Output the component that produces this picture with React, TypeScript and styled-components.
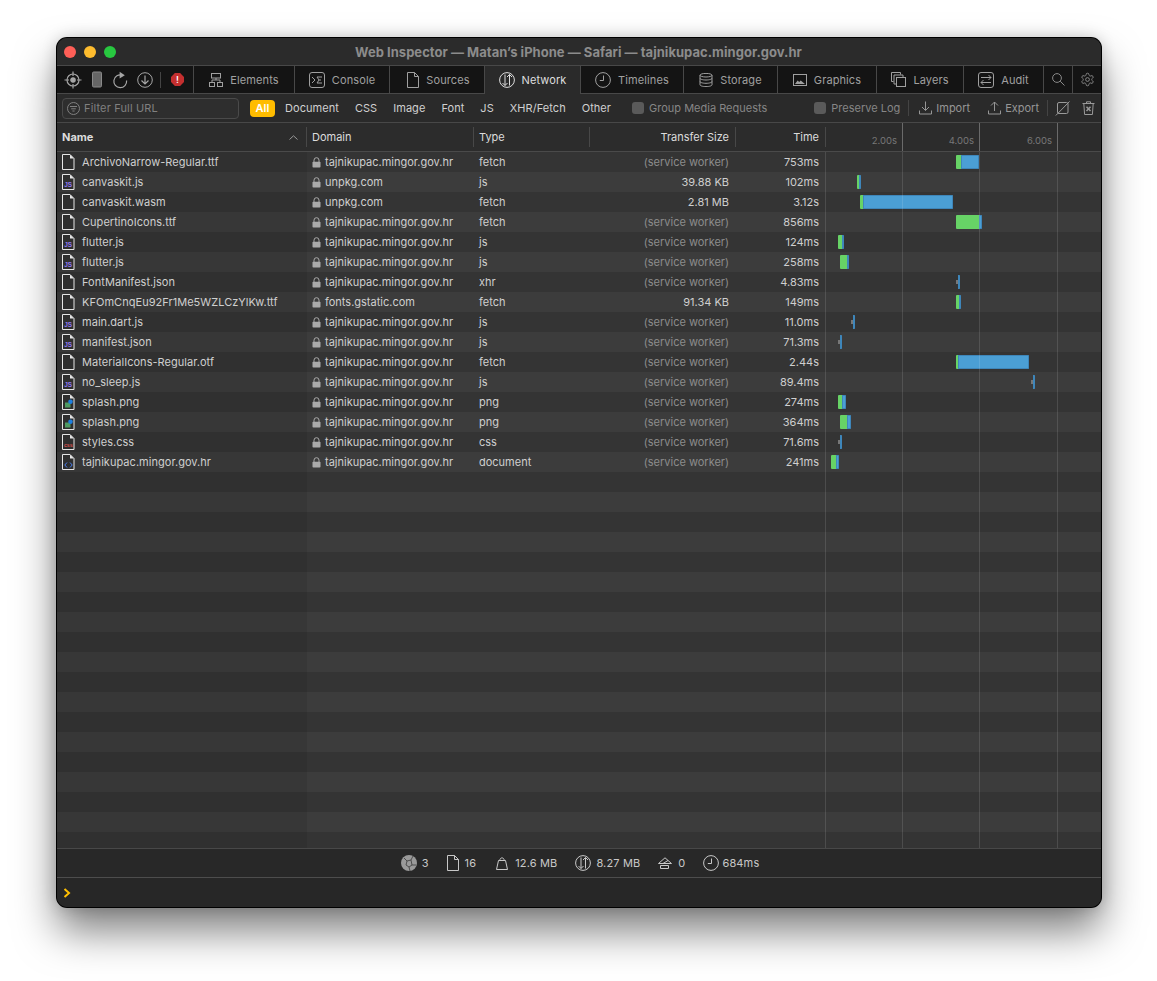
import React from 'react'
import styled, { createGlobalStyle } from 'styled-components'

const GlobalStyle = createGlobalStyle`
  html, body {
    margin: 0;
    padding: 0;
    background: #fff;
    font-family: Inter, "Liberation Sans", sans-serif;
  }
`

const stroke = { fill: 'none', stroke: 'currentColor', strokeWidth: 1 }

const Crosshair = () => (
  <svg width="18" height="18" viewBox="0 0 18 18" {...stroke} strokeWidth={1.2}>
    <circle cx="9" cy="9" r="6" />
    <circle cx="9" cy="9" r="2.2" fill="currentColor" />
    <path d="M9 0.5V5M9 13v4.5M0.5 9H5M13 9h4.5" />
  </svg>
)
const Device = () => (
  <svg width="12" height="17" viewBox="0 0 12 17">
    <rect x="1.5" y="1" width="9" height="15" rx="1.2" fill="#666" stroke="#8a8a8a" />
  </svg>
)
const Reload = () => (
  <svg width="16" height="18" viewBox="0 0 16 18" {...stroke} strokeWidth={1.2}>
    <path d="M10.2 4.2A6.4 6.4 0 1 0 14.6 9.5" />
    <path d="M7.6 0.8l5.2 3.4-5.2 3.2z" fill="currentColor" stroke="none" />
  </svg>
)
const Download = () => (
  <svg width="16" height="16" viewBox="0 0 16 16" {...stroke}>
    <circle cx="8" cy="8" r="7.3" />
    <path d="M8 3.5v8.5M4.5 8.5L8 12l3.5-3.5" strokeWidth={1.2} />
  </svg>
)
const Elements = () => (
  <svg width="14" height="14" viewBox="0 0 14 14" {...stroke}>
    <rect x="2.5" y="0.5" width="9" height="4.500" />
    <rect x="0.5" y="9.500" width="5" height="4" />
    <rect x="8.500" y="9.500" width="5" height="4" />
    <path d="M7 5v2M3 9.500V7h8v2.500" />
  </svg>
)
const ConsoleIcon = () => (
  <svg width="16" height="16" viewBox="0 0 16 16" {...stroke}>
    <rect x="0.5" y="0.5" width="15" height="15" rx="2.5" />
    <path d="M3 5L6 8 3 11M8 5h5M10 8h2M8 11h5M8 5l2 3-2 3" />
  </svg>
)
const Doc = ({ size = 16 }: { size?: number }) => (
  <svg width={Math.round(size * 0.75)} height={size} viewBox="0 0 12 16" {...stroke}>
    <path d="M0.5 0.5h7l4 4v11h-11zM7.5 0.5v4h4" />
  </svg>
)
const NetworkIcon = () => (
  <svg width="16" height="16" viewBox="0 0 16 16" {...stroke}>
    <circle cx="8" cy="8" r="7.4" />
    <path d="M6 2.5v11M3.5 11L6 13.5 8.5 11M10.5 13.5v-11M8 5l2.5-2.5L13 5" />
  </svg>
)
const Clock = () => (
  <svg width="16" height="16" viewBox="0 0 16 16" {...stroke}>
    <circle cx="8" cy="8" r="7.4" />
    <path d="M8.5 3.5v5H4.8" />
  </svg>
)
const StorageIcon = () => (
  <svg width="14" height="14" viewBox="0 0 14 14" {...stroke}>
    <ellipse cx="7" cy="2.2" rx="6" ry="1.8" />
    <path d="M1 2.2v9.6C1 12.8 3.7 13.6 7 13.6s6-.8 6-1.8V2.2M1 5.2C1 6.2 3.7 7 7 7s6-.8 6-1.8M1 8.5c0 1 2.7 1.8 6 1.8s6-.8 6-1.8" />
  </svg>
)
const GraphicsIcon = () => (
  <svg width="14" height="12" viewBox="0 0 14 12">
    <rect x="0.5" y="0.5" width="13" height="11" fill="none" stroke="currentColor" />
    <path d="M2 10l2.6-3.5 1.6 1.6 1.5-1.7L12 10z" fill="currentColor" />
  </svg>
)
const LayersIcon = () => (
  <svg width="15" height="15" viewBox="0 0 15 15" {...stroke}>
    <path d="M9.5 2.5v-2h-9v9h2M12 5V3H3v9h2" />
    <rect x="5.5" y="5.5" width="9" height="9" />
  </svg>
)
const AuditIcon = () => (
  <svg width="16" height="16" viewBox="0 0 16 16" {...stroke}>
    <rect x="0.5" y="0.5" width="15" height="15" rx="2.5" />
    <path d="M3 5.5h10M10.5 3L13 5.5 10.5 8M13 10.5H3M5.5 8L3 10.5 5.5 13" />
  </svg>
)
const SearchIcon = () => (
  <svg width="13" height="13" viewBox="0 0 13 13" {...stroke}>
    <circle cx="5" cy="5" r="4.4" />
    <path d="M8.2 8.2l4.3 4.3" />
  </svg>
)
const GearIcon = () => (
  <svg width="15" height="15" viewBox="0 0 24 24" fill="none" stroke="currentColor" strokeWidth={1.6}>
    <path d="M12.2 2h-.4a2 2 0 0 0-2 2v.2a2 2 0 0 1-1 1.7l-.4.3a2 2 0 0 1-2 0l-.2-.1a2 2 0 0 0-2.7.7l-.2.4a2 2 0 0 0 .7 2.7l.2.1a2 2 0 0 1 1 1.7v.5a2 2 0 0 1-1 1.8l-.2.1a2 2 0 0 0-.7 2.7l.2.4a2 2 0 0 0 2.7.7l.2-.1a2 2 0 0 1 2 0l.4.3a2 2 0 0 1 1 1.7v.2a2 2 0 0 0 2 2h.4a2 2 0 0 0 2-2v-.2a2 2 0 0 1 1-1.7l.4-.3a2 2 0 0 1 2 0l.2.1a2 2 0 0 0 2.7-.7l.2-.4a2 2 0 0 0-.7-2.7l-.2-.1a2 2 0 0 1-1-1.8v-.5a2 2 0 0 1 1-1.7l.2-.1a2 2 0 0 0 .7-2.7l-.2-.4a2 2 0 0 0-2.7-.7l-.2.1a2 2 0 0 1-2 0l-.4-.3a2 2 0 0 1-1-1.7V4a2 2 0 0 0-2-2z" />
    <circle cx="12" cy="12" r="3" />
  </svg>
)
const FilterIcon = () => (
  <svg width="13" height="13" viewBox="0 0 13 13" {...stroke}>
    <circle cx="6.5" cy="6.5" r="6" />
    <path d="M3 4.5h7M4.2 6.8h4.6M5.4 9h2.2" />
  </svg>
)
const ImportIcon = () => (
  <svg width="13" height="14" viewBox="0 0 13 14" {...stroke}>
    <path d="M6.5 0.5v9M3 6l3.5 3.5L10 6M0.5 9.5v3.5h12V9.5" />
  </svg>
)
const ExportIcon = () => (
  <svg width="13" height="14" viewBox="0 0 13 14" {...stroke}>
    <path d="M6.5 10V1M3 4.5L6.500 1 10 4.500M0.5 9.500v3.500h12V9.500" />
  </svg>
)
const NoOverlay = () => (
  <svg width="15" height="15" viewBox="0 0 15 15" {...stroke}>
    <rect x="2.500" y="1.500" width="10.500" height="11" rx="1.500" />
    <path d="M0.800 14.500L14.500 0.500" />
  </svg>
)
const TrashIcon = () => (
  <svg width="13" height="14" viewBox="0 0 13 14">
    <path d="M0.500 2.500h12M4.500 2.500V0.800h4v1.700M1.800 2.500l.8 11h7.800l.8-11" fill="none" stroke="currentColor" />
    <path d="M4.500 5.800l4 4.200M8.500 5.800l-4 4.200" fill="none" stroke="currentColor" strokeWidth="1.500" />
  </svg>
)
const GlobeIcon = () => (
  <svg width="16" height="16" viewBox="0 0 16 16">
    <circle cx="8" cy="8" r="8" fill="#9a9a9a" />
    <path d="M3 3l3 3-1 4 3 2 1 4M6 6l4-1 2-4M10 5l1 5-3 2M11 10l4 0" fill="none" stroke="#3a3a3a" strokeWidth="0.8" />
  </svg>
)
const WeightIcon = () => (
  <svg width="12" height="13" viewBox="0 0 12 13" {...stroke}>
    <path d="M2.500 3.500h7l2 9H0.500zM3.800 3.500C3.800 0 8.200 0 8.200 3.500" />
  </svg>
)
const CacheIcon = () => (
  <svg width="14" height="12" viewBox="0 0 14 12" {...stroke}>
    <path d="M0.500 6.500L7 0.800 13.500 6.500zM2.500 8.500h8v3h-8z" />
    <path d="M5 6.500l5-3" />
  </svg>
)
const LockIcon = () => (
  <svg width="9" height="11" viewBox="0 0 9 11">
    <path d="M2 5V3.200a2.500 2.500 0 0 1 5 0V5" fill="none" stroke="#aaa" />
    <rect x="0.500" y="4.800" width="8" height="5.700" rx="0.800" fill="#aaa" />
  </svg>
)

type FileKind = 'file' | 'js' | 'png' | 'css' | 'doc'

const FileIcon = ({ kind }: { kind: FileKind }) => (
  <svg width="13" height="16" viewBox="0 0 13 16">
    <path d="M0.500 0.500h7.500l4 4v11h-11.500z" fill="#2e2e2e" stroke="#e6e6e6" />
    <path d="M8 0.500l4 4h-4z" fill="#e6e6e6" />
    {kind === 'js' && (
      <text x="6.200" y="13" textAnchor="middle" fontSize="6.500" fontWeight="700" fontFamily="Liberation Sans" fill="#8f78ee">JS</text>
    )}
    {kind === 'css' && (
      <text x="6.300" y="13" textAnchor="middle" fontSize="5.200" fontWeight="700" fontFamily="Liberation Sans" fill="#d9534f">css</text>
    )}
    {kind === 'png' && (
      <>
        <rect x="3" y="8.500" width="5.500" height="5" fill="#4f9a63" />
        <circle cx="8.500" cy="7.800" r="2.300" fill="#1e7fe0" />
      </>
    )}
    {kind === 'doc' && (
      <path d="M5 8.500L2.800 11 5 13.500M8 8.500L10.200 11 8 13.500" fill="none" stroke="#4a80f0" strokeWidth="1" />
    )}
  </svg>
)

const tabs = [
  { label: 'Elements', icon: <Elements />, width: 101 },
  { label: 'Console', icon: <ConsoleIcon />, width: 95 },
  { label: 'Sources', icon: <Doc />, width: 95, nudge: 3 },
  { label: 'Network', icon: <NetworkIcon />, width: 96, active: true },
  { label: 'Timelines', icon: <Clock />, width: 103 },
  { label: 'Storage', icon: <StorageIcon />, width: 94 },
  { label: 'Graphics', icon: <GraphicsIcon />, width: 99 },
  { label: 'Layers', icon: <LayersIcon />, width: 87 },
  { label: 'Audit', icon: <AuditIcon />, width: 80 },
]

const filters = ['Document', 'CSS', 'Image', 'Font', 'JS', 'XHR/Fetch', 'Other']

const gs = 'tajnikupac.mingor.gov.hr'
const sw = '(service worker)'

// left is px from the start of the timeline column, bars are [green, blue] widths
const requests: {
  name: string; kind: FileKind; domain: string; type: string; size: string; time: string
  left: number; green: number; blue: number; stub?: boolean
}[] = [
  { name: 'ArchivoNarrow-Regular.ttf', kind: 'file', domain: gs, type: 'fetch', size: sw, time: '753ms', left: 130, green: 5, blue: 18 },
  { name: 'canvaskit.js', kind: 'js', domain: 'unpkg.com', type: 'js', size: '39.88 KB', time: '102ms', left: 31, green: 2, blue: 2 },
  { name: 'canvaskit.wasm', kind: 'file', domain: 'unpkg.com', type: 'fetch', size: '2.81 MB', time: '3.12s', left: 34, green: 3, blue: 90 },
  { name: 'CupertinoIcons.ttf', kind: 'file', domain: gs, type: 'fetch', size: sw, time: '856ms', left: 130, green: 23, blue: 3 },
  { name: 'flutter.js', kind: 'js', domain: gs, type: 'js', size: sw, time: '124ms', left: 12, green: 4, blue: 2 },
  { name: 'flutter.js', kind: 'js', domain: gs, type: 'js', size: sw, time: '258ms', left: 14, green: 7, blue: 2 },
  { name: 'FontManifest.json', kind: 'file', domain: gs, type: 'xhr', size: sw, time: '4.83ms', left: 130, green: 2, blue: 2, stub: true },
  { name: 'KFOmCnqEu92Fr1Me5WZLCzYlKw.ttf', kind: 'file', domain: 'fonts.gstatic.com', type: 'fetch', size: '91.34 KB', time: '149ms', left: 130, green: 3, blue: 2 },
  { name: 'main.dart.js', kind: 'js', domain: gs, type: 'js', size: sw, time: '11.0ms', left: 25, green: 2, blue: 2, stub: true },
  { name: 'manifest.json', kind: 'js', domain: gs, type: 'js', size: sw, time: '71.3ms', left: 12, green: 2, blue: 2, stub: true },
  { name: 'MaterialIcons-Regular.otf', kind: 'file', domain: gs, type: 'fetch', size: sw, time: '2.44s', left: 130, green: 2, blue: 71 },
  { name: 'no_sleep.js', kind: 'js', domain: gs, type: 'js', size: sw, time: '89.4ms', left: 205, green: 2, blue: 2, stub: true },
  { name: 'splash.png', kind: 'png', domain: gs, type: 'png', size: sw, time: '274ms', left: 12, green: 4, blue: 4 },
  { name: 'splash.png', kind: 'png', domain: gs, type: 'png', size: sw, time: '364ms', left: 14, green: 7, blue: 4 },
  { name: 'styles.css', kind: 'css', domain: gs, type: 'css', size: sw, time: '71.6ms', left: 12, green: 2, blue: 2, stub: true },
  { name: gs, kind: 'doc', domain: gs, type: 'document', size: sw, time: '241ms', left: 5, green: 5, blue: 3 },
]

const TOTAL_ROWS = 35
const COLUMNS = '250px 167px 116px 146px 90px 1fr'

const App: React.FC = () => {
  return (
    <Page>
      <GlobalStyle />
      <Window>
        <TitleBar>
          <Lights>
            <Light $color="#ff5f57" />
            <Light $color="#febc2e" />
            <Light $color="#28c840" />
          </Lights>
          <Title>Web Inspector — Matan’s iPhone — Safari — tajnikupac.mingor.gov.hr</Title>
        </TitleBar>

        <TabBar>
          <ToolGroup>
            <Crosshair />
            <Device />
            <Reload />
            <Download />
            <ToolDivider />
            <ErrorBadge>!</ErrorBadge>
          </ToolGroup>
          {tabs.map(tab => (
            <Tab key={tab.label} $active={tab.active} $width={tab.width} $nudge={tab.nudge}>
              {tab.icon}
              <span>{tab.label}</span>
            </Tab>
          ))}
          <IconTab $width={29}><SearchIcon /></IconTab>
          <IconTab $width={29}><GearIcon /></IconTab>
        </TabBar>

        <FilterBar>
          <FilterInput>
            <FilterIcon />
            <span>Filter Full URL</span>
          </FilterInput>
          <Pill>All</Pill>
          {filters.map(f => <FilterLink key={f}>{f}</FilterLink>)}
          <CheckLabel $left={5}><Checkbox />Group Media Requests</CheckLabel>
          <Spacer />
          <CheckLabel><Checkbox />Preserve Log</CheckLabel>
          <BarDivider />
          <BarAction $gap={15}><ImportIcon />Import</BarAction>
          <BarAction><ExportIcon />Export</BarAction>
          <BarDivider />
          <BarIcon><NoOverlay /></BarIcon>
          <BarIcon><TrashIcon /></BarIcon>
        </FilterBar>

        <Grid>
          <HeaderRow>
            <HeadCell $bold>
              Name
              <SortCaret viewBox="0 0 9 5" width="9" height="5"><path d="M0.500 4.500L4.500 0.800 8.500 4.500" fill="none" stroke="#999" /></SortCaret>
            </HeadCell>
            <HeadCell>Domain</HeadCell>
            <HeadCell>Type</HeadCell>
            <HeadCell $right>Transfer Size</HeadCell>
            <HeadCell $right>Time</HeadCell>
            <Scale>
              <ScaleMark>2.00s</ScaleMark>
              <ScaleMark>4.00s</ScaleMark>
              <ScaleMark>6.00s</ScaleMark>
            </Scale>
          </HeaderRow>

          <Body>
            {Array.from({ length: TOTAL_ROWS }).map((_, i) => {
              const r = requests[i]
              return (
                <Row key={i} $odd={i % 2 === 1}>
                  <NameCell $odd={i % 2 === 1}>
                    {r && <FileIcon kind={r.kind} />}
                    {r && <span>{r.name}</span>}
                  </NameCell>
                  <Cell>
                    {r && <LockIcon />}
                    {r && <span>{r.domain}</span>}
                  </Cell>
                  <Cell>{r?.type}</Cell>
                  <Cell $right $dim={r?.size === sw}>{r?.size}</Cell>
                  <Cell $right>{r?.time}</Cell>
                  <Waterfall>
                    {r && (
                      <>
                        <span style={{ width: r.left }} />
                        {r.stub ? <Stub /> : <GreenBar style={{ width: r.green }} />}
                        <BlueBar style={{ width: r.blue }} />
                      </>
                    )}
                  </Waterfall>
                </Row>
              )
            })}
            <GridLine $at={-1} />
            <GridLine $at={76} />
            <GridLine $at={153} />
            <GridLine $at={231} />
          </Body>
        </Grid>

        <StatusBar>
          <Stat><GlobeIcon />3</Stat>
          <Stat $gap={6}><Doc size={16} />16</Stat>
          <Stat $gap={7} $left={2}><WeightIcon />12.6 MB</Stat>
          <Stat><NetworkIcon />8.27 MB</Stat>
          <Stat $gap={6}><CacheIcon />0</Stat>
          <Stat $gap={3}><Clock />684ms</Stat>
        </StatusBar>

        <Prompt>
          <svg width="8" height="10" viewBox="0 0 8 10">
            <path d="M1.500 1L6 5 1.500 9" fill="none" stroke="#ffbf00" strokeWidth="2" />
          </svg>
        </Prompt>
      </Window>
    </Page>
  )
}

const Page = styled.div`
  width: 1157px;
  height: 981px;
  padding: 38px 0 0 57px;
  box-sizing: border-box;
  overflow: hidden;
  background: #fff;
`

const Window = styled.div`
  width: 1044px;
  height: 869px;
  box-sizing: border-box;
  display: flex;
  flex-direction: column;
  background: #282828;
  border-radius: 10px;
  overflow: hidden;
  box-shadow: 0 0 0 1px #000, 0 24px 42px rgba(0, 0, 0, 0.5), 0 0 16px rgba(0, 0, 0, 0.2);
  color: #d8d8d8;
  font-size: 11px;
`

const TitleBar = styled.div`
  height: 28px;
  flex: none;
  box-sizing: border-box;
  display: flex;
  align-items: center;
  justify-content: center;
  position: relative;
  background: #2b2b2b;
  border-bottom: 1px solid #484848;
`

const Lights = styled.div`
  position: absolute;
  left: 7px;
  top: 8px;
  display: flex;
  gap: 8px;
`

const Light = styled.i<{ $color: string }>`
  width: 12px;
  height: 12px;
  border-radius: 50%;
  background: ${p => p.$color};
`

const Title = styled.div`
  font-size: 13px;
  font-weight: 700;
  color: #8c8c8c;
  letter-spacing: 0.03px;
  margin-right: 1px;
`

const TabBar = styled.div`
  height: 28px;
  flex: none;
  display: flex;
  background: #141414;
  border-bottom: 1px solid #484848;
  box-sizing: border-box;
`

const ToolGroup = styled.div`
  width: 136px;
  box-sizing: border-box;
  display: flex;
  align-items: center;
  gap: 9px;
  padding-left: 7px;
  color: #a6a6a6;
  flex: none;
`

const ToolDivider = styled.div`
  width: 1px;
  height: 16px;
  margin: 0 1px 0 -2px;
  background: #444;
`

const ErrorBadge = styled.div`
  width: 13px;
  height: 13px;
  background: #c42f2f;
  clip-path: polygon(30% 0, 70% 0, 100% 30%, 100% 70%, 70% 100%, 30% 100%, 0 70%, 0 30%);
  color: #fff;
  font-size: 9px;
  font-weight: 600;
  line-height: 13px;
  text-align: center;
`

const Tab = styled.div<{ $active?: boolean; $width: number; $nudge?: number }>`
  width: ${p => p.$width}px;
  flex: none;
  box-sizing: border-box;
  display: flex;
  align-items: center;
  justify-content: center;
  gap: 7px;
  padding-left: ${p => p.$nudge ?? 0}px;
  font-size: 11px;
  letter-spacing: 0.1px;
  border-left: 1px solid #484848;
  color: ${p => (p.$active ? '#dedede' : '#a0a0a0')};
  background: ${p => (p.$active ? '#2a2a2a' : 'transparent')};
  height: ${p => (p.$active ? '28px' : 'auto')};
`

const IconTab = styled.div<{ $width: number }>`
  width: ${p => p.$width}px;
  flex: none;
  box-sizing: border-box;
  display: flex;
  align-items: center;
  justify-content: center;
  border-left: 1px solid #484848;
  color: #8a8a8a;
`

const FilterBar = styled.div`
  height: 29px;
  flex: none;
  display: flex;
  align-items: center;
  box-sizing: border-box;
  padding: 0 6px 0 5px;
  background: #2a2a2a;
  border-bottom: 1px solid #484848;
`

const FilterInput = styled.div`
  width: 177px;
  height: 21px;
  box-sizing: border-box;
  margin-right: 11px;
  display: flex;
  align-items: center;
  gap: 4px;
  padding-left: 4px;
  border: 1px solid #4a4a4a;
  border-radius: 4px;
  background: #2e2e2e;
  color: #808080;
  font-size: 11px;
  letter-spacing: 0.15px;
`

const Pill = styled.div`
  width: 25px;
  height: 17px;
  line-height: 17px;
  text-align: center;
  border-radius: 4px;
  background: #ffbc00;
  color: #fff;
  font-weight: 600;
  margin-right: 10px;
`

const FilterLink = styled.div`
  color: #d0d0d0;
  margin-right: 16px;
  letter-spacing: 0.05px;
`

const Spacer = styled.div`
  flex: 1;
`

const CheckLabel = styled.div<{ $left?: number }>`
  display: flex;
  align-items: center;
  gap: 5px;
  color: #868686;
  margin-left: ${p => p.$left ?? 0}px;
`

const Checkbox = styled.i`
  width: 12px;
  height: 12px;
  border-radius: 3px;
  background: #5a5a5a;
`

const BarDivider = styled.div`
  width: 1px;
  height: 16px;
  margin: 0 7px 0 8px;
  background: #444;
`

const BarAction = styled.div<{ $gap?: number }>`
  display: flex;
  align-items: center;
  gap: 4px;
  color: #969696;
  margin: 0 ${p => p.$gap ?? 0}px 0 3px;
`

const BarIcon = styled.div`
  display: flex;
  color: #9a9a9a;
  margin-right: 12px;
  &:last-child {
    margin-right: 0;
  }
`

const Grid = styled.div`
  flex: none;
  display: flex;
  flex-direction: column;
`

const HeaderRow = styled.div`
  height: 29px;
  flex: none;
  display: grid;
  grid-template-columns: ${COLUMNS};
  box-sizing: border-box;
  background: #2c2c2c;
  border-bottom: 1px solid #4a4a4a;
`

const HeadCell = styled.div<{ $right?: boolean; $bold?: boolean }>`
  display: flex;
  align-items: center;
  justify-content: ${p => (p.$bold ? 'space-between' : p.$right ? 'flex-end' : 'flex-start')};
  padding: 0 6px 0 5px;
  margin: 4px 0;
  border-right: 1px solid #484848;
  font-weight: ${p => (p.$bold ? 700 : 400)};
  color: #dcdcdc;
`

const SortCaret = styled.svg`
  margin-right: 2px;
`

const Scale = styled.div`
  display: grid;
  grid-template-columns: 77px 77px 78px;
  color: #777;
  font-size: 9.5px;
`

const ScaleMark = styled.div`
  display: flex;
  align-items: center;
  justify-content: flex-end;
  padding: 6px 5px 0 0;
  border-right: 1px solid #6a6a6a;
`

const Body = styled.div`
  position: relative;
  height: 696px;
  flex: none;
  overflow: hidden;
`

const Row = styled.div<{ $odd: boolean }>`
  height: 20px;
  display: grid;
  grid-template-columns: ${COLUMNS};
  align-items: center;
  background: ${p => (p.$odd ? '#3c3c3c' : '#343434')};
`

const NameCell = styled.div<{ $odd: boolean }>`
  height: 20px;
  display: flex;
  align-items: center;
  gap: 7px;
  padding-left: 5px;
  box-sizing: border-box;
  background: ${p => (p.$odd ? '#373737' : '#303030')};
  color: #cfcfcf;
  letter-spacing: 0.04px;
  white-space: nowrap;
`

const Cell = styled.div<{ $right?: boolean; $dim?: boolean }>`
  height: 20px;
  display: flex;
  align-items: center;
  gap: 4px;
  padding: 0 7px 0 5px;
  box-sizing: border-box;
  justify-content: ${p => (p.$right ? 'flex-end' : 'flex-start')};
  color: ${p => (p.$dim ? '#8c8c8c' : '#cfcfcf')};
`

const Waterfall = styled.div`
  height: 14px;
  display: flex;
  align-items: center;
`

const GreenBar = styled.i`
  height: 14px;
  background: #67d366;
  border-radius: 1px 0 0 1px;
`

const BlueBar = styled.i`
  height: 14px;
  background: #4b9fd5;
  box-shadow: inset 0 0 0 1px rgba(50, 110, 160, 0.5);
  border-radius: 0 1px 1px 0;
`

const Stub = styled.i`
  width: 2px;
  height: 4px;
  background: #777;
`

const GridLine = styled.div<{ $at: number }>`
  position: absolute;
  top: 0;
  bottom: 0;
  left: ${p => 769 + p.$at}px;
  width: 1px;
  background: rgba(255, 255, 255, 0.12);
`

const StatusBar = styled.div`
  height: 30px;
  flex: none;
  box-sizing: border-box;
  display: flex;
  align-items: center;
  justify-content: center;
  gap: 18px;
  padding-left: 2px;
  background: #282828;
  border-top: 1px solid #484848;
  border-bottom: 1px solid #4d4d4d;
  color: #c8c8c8;
  font-size: 11px;
  letter-spacing: 0.15px;
`

const Stat = styled.div<{ $gap?: number; $left?: number }>`
  display: flex;
  align-items: center;
  gap: ${p => p.$gap ?? 5}px;
  margin-left: ${p => p.$left ?? 0}px;
`

const Prompt = styled.div`
  flex: 1;
  display: flex;
  align-items: center;
  padding-left: 6px;
  background: #272727;
`

export default App
